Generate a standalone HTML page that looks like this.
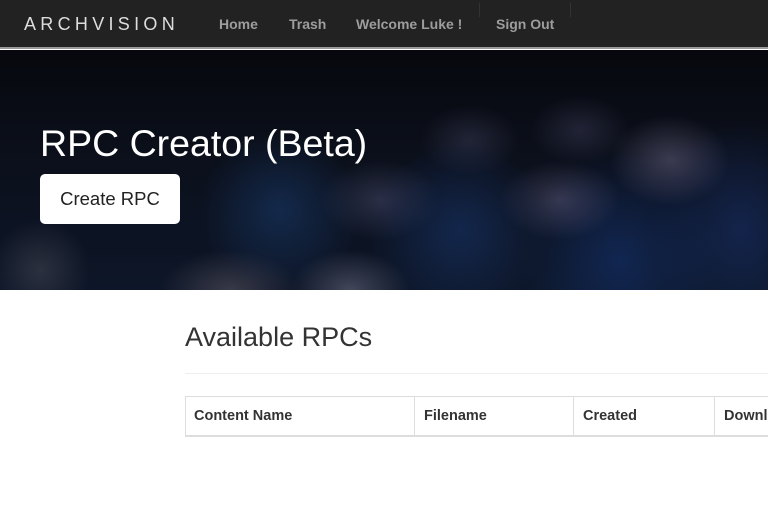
<!DOCTYPE html>
<html><head><meta charset="utf-8"><style>
*{margin:0;padding:0;box-sizing:border-box}
body{width:768px;height:523px;overflow:hidden;background:#fff;font-family:"Liberation Sans",Arial,sans-serif}
.nav{position:absolute;left:0;top:0;width:768px;height:49px;background:#222;border-bottom:2px solid #9a9a9a}
.logo{position:absolute;left:24px;top:14px;color:#ddd;font-size:18px;letter-spacing:4.3px}
.nav a{position:absolute;top:16px;color:#9d9d9d;font-weight:bold;font-size:14px;text-decoration:none}
.sep{position:absolute;top:3px;width:1px;height:14px;background:#333}
.hero{position:absolute;left:0;top:50px;width:768px;height:240px;overflow:hidden;
background:
radial-gradient(ellipse 60px 40px at 350px 240px,rgba(130,130,150,.45),transparent),
radial-gradient(ellipse 70px 40px at 230px 240px,rgba(110,100,110,.45),transparent),
radial-gradient(ellipse 50px 50px at 40px 220px,rgba(90,90,100,.4),transparent),
radial-gradient(ellipse 80px 80px at 280px 160px,rgba(25,60,110,.55),transparent),
radial-gradient(ellipse 90px 90px at 460px 180px,rgba(25,55,110,.55),transparent),
radial-gradient(ellipse 60px 40px at 380px 150px,rgba(100,100,140,.35),transparent),
radial-gradient(ellipse 60px 40px at 560px 150px,rgba(130,120,160,.35),transparent),
radial-gradient(ellipse 60px 45px at 670px 110px,rgba(150,140,180,.35),transparent),
radial-gradient(ellipse 100px 110px at 620px 210px,rgba(20,50,110,.6),transparent),
radial-gradient(ellipse 90px 110px at 740px 180px,rgba(25,50,110,.55),transparent),
radial-gradient(ellipse 50px 35px at 470px 90px,rgba(100,100,140,.25),transparent),
radial-gradient(ellipse 50px 35px at 580px 80px,rgba(100,100,140,.25),transparent),
linear-gradient(180deg,#06080d 0%,#0b0f1a 40%,#0d1628 100%)}
.hero h1{position:absolute;left:40px;top:72px;color:#fff;font-weight:normal;font-size:37.5px}
.btn{position:absolute;left:40px;top:124px;width:140px;height:50px;background:#fff;border-radius:5px;color:#222;font-size:18.5px;text-align:center;line-height:50px}
h2{position:absolute;left:185px;top:322px;font-weight:normal;font-size:27px;color:#333}
.hr{position:absolute;left:185px;top:373px;width:583px;height:1px;background:#eee}
.tbl{position:absolute;left:185px;top:396px;width:600px;height:41px;border:1px solid #ddd;border-bottom:2px solid #ddd}
.tbl div{position:absolute;top:0;height:39px;border-left:1px solid #ddd;font-weight:bold;font-size:14.5px;color:#333;line-height:38px;padding-left:9px}
</style></head><body>
<div class="nav">
<div class="logo">ARCHVISION</div>
<a style="left:219px">Home</a>
<a style="left:289px">Trash</a>
<a style="left:356px">Welcome Luke !</a>
<a style="left:496px">Sign Out</a>
<div class="sep" style="left:479px"></div><div class="sep" style="left:570px"></div>
</div>
<div class="hero"><h1>RPC Creator (Beta)</h1><div class="btn">Create RPC</div></div>
<h2>Available RPCs</h2>
<div class="hr"></div>
<div class="tbl">
<div style="left:-1px;border-left:none">Content Name</div>
<div style="left:228px">Filename</div>
<div style="left:387px">Created</div>
<div style="left:528px">Downloads</div>
</div>
</body></html>
